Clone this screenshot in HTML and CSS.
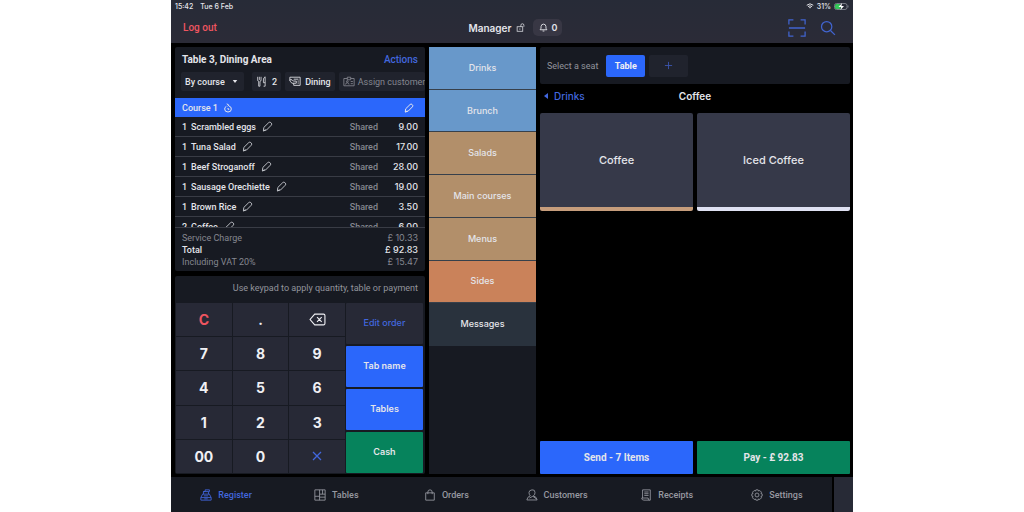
FILE: index.html
```html
<!DOCTYPE html>
<html lang="en">
<head>
<meta charset="utf-8">
<meta name="viewport" content="width=device-width, initial-scale=1">
<title>Register</title>
<link rel="stylesheet" href="styles.css">
</head>
<body>
<svg class="defs" aria-hidden="true">
  <symbol id="pencil" viewBox="0 0 12 12"><path d="M1.500 10.800 2 7 7.300 1.800q1.200-1.100 2.300-.1l.6.6q1 1.100-.1 2.300L5 9.800ZM1.500 10.800 4 9.500"/></symbol>
</svg>
<div class="app">
  <header class="top">
    <div class="status">
      <span>15:42</span><span class="date">Tue 6 Feb</span>
      <span class="power">
        <svg class="wifi" viewBox="0 0 16 12"><path d="M1.500 4.500Q8-1.300 14.500 4.500M4 7.200q4-3.400 8 0"/><path class="solid" d="m8 11-2.200-2.400q2.200-1.500 4.400 0Z"/></svg>
        <span>31%</span>
        <svg class="battery" viewBox="0 0 30 14"><rect class="cell" x="1" y="1" width="25" height="12" rx="4"/><rect class="charge" x="2" y="2" width="11" height="10" rx="3"/><path class="bolt" d="M16 0 9 8h5l-1 6 7-8h-5Z"/><path class="cell" d="M28 5v4"/></svg>
      </span>
    </div>
    <div class="bar">
      <button class="logout">Log out</button>
      <div class="user">
        <span class="name">Manager</span>
        <svg class="lock" viewBox="0 0 12 12"><rect x="1.500" y="5" width="7.500" height="6"/><path d="M6.500 5V3q0-2 2-2t2 2v2M5.200 7.200v1.800"/></svg>
        <button class="bell"><svg viewBox="0 0 12 12"><path d="M1.500 9h9L9.300 7V4.800Q9 1.500 6 1.500T2.700 4.800V7ZM4.800 10.700h2.400"/></svg>0</button>
      </div>
      <div class="tools">
        <button aria-label="Scan"><svg class="scan" viewBox="0 0 20 20"><path d="M1 6V1h5M14 1h5v5M19 14v5h-5M6 19H1v-5M1 10h18"/></svg></button>
        <button aria-label="Search"><svg class="search" viewBox="0 0 18 18"><circle cx="7.500" cy="7.500" r="5.800"/><path d="m11.800 11.800 5 5"/></svg></button>
      </div>
    </div>
  </header>

  <main class="work">
    <div class="left">
      <section class="panel order">
        <div class="order-head"><h1>Table 3, Dining Area</h1><button class="link">Actions</button></div>
        <div class="chips">
          <label class="chip sort"><select aria-label="Group items"><option>By course</option></select><svg viewBox="0 0 6 4"><path d="M0 0h6L3 4Z"/></svg></label>
          <span class="rule"></span>
          <button class="chip"><svg class="cutlery" viewBox="0 0 14 14"><path d="M1.500 1v4q0 1.800 1.300 1.800V13h1.600V6.800Q5.800 6.800 5.800 5V1M3.600 1v4M9 13h2V1Q8.800 2 8.800 5v3.500H11"/></svg>2</button>
          <button class="chip"><svg viewBox="0 0 14 12"><path d="M1 1h12v9.500H5.500V8M1 1v4.500L3.500 8h5V5.500H5L3.500 4H1M5.500 3.300H11M10 5.500h1.500M10 7.800h1.500"/></svg>Dining</button>
          <button class="chip assign"><svg viewBox="0 0 14 12"><path d="M5 2.500H1V11h12V2.500H9M5 1h4v3H5ZM3 9.500q0-2 2-2t2 2M9 6h2.500M9 8.500h2.500"/><circle cx="5" cy="6" r="1"/></svg>Assign customer</button>
        </div>
        <div class="course"><span>Course 1</span><svg viewBox="0 0 12 12"><path d="M4.500 1 7 2.500 5.500 4M7 3.500q3 .7 3 3.700 0 3.600-4 3.600T2 7.200Q2 5 4 4M6 6v1.500h1.500"/></svg><button aria-label="Edit course"><svg><use href="#pencil"/></svg></button></div>
        <ul class="items">
          <li><span>1</span><span>Scrambled eggs</span><svg><use href="#pencil"/></svg><span class="shared">Shared</span><span class="price">9.00</span></li>
          <li><span>1</span><span>Tuna Salad</span><svg><use href="#pencil"/></svg><span class="shared">Shared</span><span class="price">17.00</span></li>
          <li><span>1</span><span>Beef Stroganoff</span><svg><use href="#pencil"/></svg><span class="shared">Shared</span><span class="price">28.00</span></li>
          <li><span>1</span><span>Sausage Orechiette</span><svg><use href="#pencil"/></svg><span class="shared">Shared</span><span class="price">19.00</span></li>
          <li><span>1</span><span>Brown Rice</span><svg><use href="#pencil"/></svg><span class="shared">Shared</span><span class="price">3.50</span></li>
          <li><span>2</span><span>Coffee</span><svg><use href="#pencil"/></svg><span class="shared">Shared</span><span class="price">6.00</span></li>
        </ul>
        <dl class="totals">
          <div><dt>Service Charge</dt><dd>£ 10.33</dd></div>
          <div class="total"><dt>Total</dt><dd>£ 92.83</dd></div>
          <div><dt>Including VAT 20%</dt><dd>£ 15.47</dd></div>
        </dl>
      </section>

      <section class="panel pad">
        <p class="hint">Use keypad to apply quantity, table or payment</p>
        <div class="pad-body">
          <div class="keys">
            <button class="clear">C</button><button>.</button>
            <button aria-label="Delete"><svg class="del" viewBox="0 0 18 14"><path d="M6 1.200h9.500q1.500 0 1.500 1.500v8.600q0 1.500-1.500 1.500H6L1 7ZM8.500 4.500l5 5M13.500 4.500l-5 5"/></svg></button>
            <button>7</button><button>8</button><button>9</button>
            <button>4</button><button>5</button><button>6</button>
            <button>1</button><button>2</button><button>3</button>
            <button>00</button><button>0</button>
            <button aria-label="Multiply"><svg class="times" viewBox="0 0 10 10"><path d="m1 1 8 8M9 1 1 9"/></svg></button>
          </div>
          <div class="actions">
            <button class="edit">Edit order</button>
            <button class="blue">Tab name</button>
            <button class="blue">Tables</button>
            <button class="green">Cash</button>
          </div>
        </div>
      </section>
    </div>

    <nav class="categories" aria-label="Categories">
      <button class="sky">Drinks</button>
      <button class="sky">Brunch</button>
      <button class="tan">Salads</button>
      <button class="tan">Main courses</button>
      <button class="tan">Menus</button>
      <button class="rust">Sides</button>
      <button class="slate">Messages</button>
    </nav>

    <section class="right">
      <div class="panel seats"><span>Select a seat</span><button class="seat blue">Table</button><button class="seat add" aria-label="Add seat"><svg viewBox="0 0 10 10"><path d="M5 1v8M1 5h8"/></svg></button></div>
      <div class="crumbs">
        <button class="link"><svg viewBox="0 0 4 6"><path d="M4 0v6L0 3Z"/></svg>Drinks</button>
        <h2>Coffee</h2>
      </div>
      <div class="products">
        <button class="product">Coffee</button>
        <button class="product pale">Iced Coffee</button>
      </div>
      <div class="checkout"><button class="blue">Send - 7 Items</button><button class="green">Pay - £ 92.83</button></div>
    </section>
  </main>

  <footer class="tabs">
    <nav>
      <a class="active" href="#"><svg viewBox="0 0 14 14"><path d="M3 6 1 10v3h12v-3l-2-4ZM1 10h12M4 6V3h2V1h5v2h-1v3M4 3h6M4.500 8h5M5 11.500h4"/></svg>Register</a>
      <a href="#"><svg viewBox="0 0 14 14"><path d="M1 1h12v12H1ZM6.500 1v12M1 8.500h5.500M6.500 6H13M10 1v5M6.500 9.500H13"/></svg>Tables</a>
      <a href="#"><svg viewBox="0 0 14 14"><path d="M2 4.500h10V13H2ZM4.500 6V3.500Q4.500 1 7 1t2.500 2.500V6"/></svg>Orders</a>
      <a href="#"><svg viewBox="0 0 14 14"><path d="M8.500 8Q12.500 9 13 12.800H1Q1.500 9 5 8M5 8Q3.500 6.500 3.500 4T7 1t3.500 3T8.500 8M4 10.500l4-2 4 3"/></svg>Customers</a>
      <a href="#"><svg viewBox="0 0 14 14"><path d="M3 1h9v12H4.500Q2 13 2 10.500H9.500Q9.500 13 11 13M3 1v9.500M5 3.500h5M5 5.500h5M5 7.500h5"/></svg>Receipts</a>
      <a href="#"><svg viewBox="0 0 14 14"><path d="m5.700 1h2.600l.5 1.400 1.500-.6 1.900 1.900-.6 1.500 1.400.5v2.600l-1.400.5.6 1.500-1.900 1.900-1.500-.6-.5 1.400H5.700l-.5-1.400-1.500.6-1.900-1.900.6-1.500L1 8.300V5.700l1.400-.5-.6-1.500 1.900-1.900 1.500.6Z"/><circle cx="7" cy="7" r="2.300"/></svg>Settings</a>
    </nav>
    <div class="corner"></div>
  </footer>
</div>
</body>
</html>
```
FILE: styles.css
```css
* { box-sizing: border-box; }
body { margin: 0; background: #fff; font-family: Inter, "Liberation Sans", sans-serif; font-size: 9px; color: #e4e5ea; }
button, select { font: inherit; color: inherit; background: none; border: 0; padding: 0; margin: 0; }
h1, h2, p, ul, dl, dd { margin: 0; padding: 0; }
svg { fill: none; stroke: currentColor; stroke-width: 1; flex: none; }
.defs { position: absolute; width: 0; height: 0; }
.app { display: flex; flex-direction: column; max-width: 682px; min-height: 100vh; margin: 0 auto; background: #000; }

.top { height: 43px; background: linear-gradient(#272b37, #2b2b37); }
.status { display: flex; align-items: center; height: 12px; padding: 0 4px; font-size: 7px; font-weight: 500; }
.date { margin-left: 7px; }
.power { display: flex; align-items: center; gap: 3px; margin-left: auto; }
.wifi { width: 8px; height: 6px; stroke-width: 2; }
.solid { fill: currentColor; stroke: none; }
.battery { width: 15px; height: 7px; }
.cell { stroke: #777b85; stroke-width: 2; }
.charge { fill: #35c759; stroke: none; }
.bolt { fill: #fff; stroke: none; }
.bar { display: grid; grid-template-columns: 1fr auto 1fr; align-items: center; height: 31px; padding: 0 17px 0 12px; }
.logout { justify-self: start; color: #ef5560; font-family: Roboto, sans-serif; font-size: 10px; font-weight: 500; }
.user { display: flex; align-items: center; gap: 5px; padding-left: 12px; }
.name { font-size: 10px; font-weight: 600; }
.lock { width: 9px; height: 9px; }
.bell { display: flex; align-items: center; justify-content: center; gap: 4px; width: 29px; height: 17px; margin-left: 3px; border-radius: 5px; background: #383744; font-weight: 600; }
.bell svg { width: 9px; height: 9px; stroke-width: 1.2; }
.tools { display: flex; justify-content: flex-end; align-items: center; gap: 14px; color: #4164cf; }
.tools button, .crumbs button { display: flex; align-items: center; }
.scan { width: 18px; height: 18px; stroke-width: 1.4; }
.search { width: 16px; height: 16px; stroke-width: 1.4; }

.work { flex: 1; display: grid; grid-template-columns: 250fr 107fr 310fr; gap: 4px; padding: 4px 3px 3px 4px; }
.panel { background: #171a22; border-radius: 2px; }
.left { display: flex; flex-direction: column; gap: 5px; min-width: 0; }
.order { height: 224px; display: flex; flex-direction: column; overflow: hidden; font-family: Roboto, sans-serif; }
.order-head { display: flex; align-items: center; justify-content: space-between; height: 24px; padding: 0 7px; }
h1 { font-size: 10px; font-weight: 700; }
.link { color: #4267de; font-weight: 500; }
.order-head .link { font-size: 10px; }
.chips { display: flex; align-items: center; gap: 4px; height: 19px; margin-top: 1px; padding-left: 6px; }
.chip { display: flex; flex: none; align-items: center; gap: 4px; height: 19px; padding: 0 4px; border-radius: 2px; background: #20232d; font-weight: 500; white-space: nowrap; }
.chip svg { width: 12px; height: 11px; }
.sort { justify-content: space-between; width: 63px; padding-right: 6px; }
.sort select { appearance: none; }
.chip.sort svg { width: 6px; height: 3px; fill: currentColor; stroke: none; }
.rule { width: 1px; height: 15px; background: #3b3e48; }
.assign { flex: 1; gap: 3px; padding-right: 0; color: #858790; font-weight: 400; }
.course { display: flex; align-items: center; gap: 5px; height: 19px; margin-top: 7px; padding: 0 11px 0 7px; background: #2b67fb; flex: none; font-weight: 500; }
.course svg { width: 10px; height: 10px; stroke-width: 1.2; }
.course button { display: flex; margin-left: auto; }
.items { flex: 1; min-height: 0; overflow: hidden; list-style: none; font-weight: 500; }
.items li { display: flex; align-items: center; height: 20px; padding: 0 7px; border-bottom: 1px solid #393c45; }
.items li span:first-child { width: 9px; flex: none; }
.items svg { width: 11px; height: 11px; margin-left: 6px; color: #c8cad0; }
.shared { margin-left: auto; color: #858790; }
.price { width: 40px; text-align: right; font-family: Inter, sans-serif; }
.totals { flex: none; padding: 4px 7px 3px; border-top: 1px solid #393c45; color: #858790; }
.totals div { display: flex; justify-content: space-between; line-height: 12px; }
.totals dd { font-family: Inter, sans-serif; }
.total { color: #e4e5ea; font-weight: 500; }

.pad { flex: 1; display: flex; flex-direction: column; padding: 0 2px 1px 1px; }
.hint { height: 27px; padding-right: 5px; line-height: 25px; text-align: right; color: #92949c; font-family: Roboto, sans-serif; }
.pad-body { flex: 1; display: grid; grid-template-columns: 169fr 77fr; gap: 1px; }
.keys { display: grid; grid-template-columns: repeat(3, 1fr); grid-auto-rows: 1fr; gap: 1px; }
.keys button { display: flex; align-items: center; justify-content: center; background: #272936; font-size: 14px; font-weight: 700; color: #f0f0f4; }
.keys .clear { color: #ef5560; }
.del { width: 17px; height: 13px; stroke-width: 1.2; }
.times { width: 10px; height: 10px; color: #4267de; stroke-width: 1.3; }
.actions { display: grid; grid-auto-rows: 1fr; gap: 2px; }
.actions button { border-radius: 1px; padding-bottom: 2px; font-weight: 600; }
.actions .edit { background: #272936; color: #4267de; font-weight: 500; }
.blue, .actions .blue { background: #2b67fb; }
.green, .actions .green { background: #06835c; }

.categories { display: grid; grid-template-rows: repeat(10, 1fr); background: #171a22; }
.categories button { padding-bottom: 1px; border-bottom: 1px solid #37404b; font-weight: 500; }
.sky { background: #6898ca; }
.tan { background: #b28f6a; }
.rust { background: #ca825a; }
.categories .slate { background: #29323d; border-color: #29323d; }

.right { display: flex; flex-direction: column; min-width: 0; }
.seats { display: flex; align-items: center; height: 37px; padding: 0 7px; gap: 4px; color: #92949c; font-family: Roboto, sans-serif; }
.seat { display: flex; align-items: center; justify-content: center; width: 39px; height: 22px; border-radius: 2px; color: #f0f0f4; font-weight: 700; }
.seats .blue { margin-left: 4px; }
.seats .add { background: #20232d; color: #3b55ae; }
.add svg { width: 9px; height: 9px; }
.crumbs { display: grid; grid-template-columns: 1fr auto 1fr; align-items: center; height: 24px; margin-bottom: 5px; padding: 0 4px; font-size: 10px; }
.crumbs svg { width: 4px; height: 6px; margin-right: 6px; fill: currentColor; stroke: none; }
h2 { font-size: 10px; font-weight: 600; }
.products, .checkout { display: grid; grid-template-columns: 1fr 1fr; gap: 4px; }
.product { height: 98px; background: #363949; border-bottom: 4px solid #c69d7c; border-radius: 2px; font-size: 11px; font-weight: 500; }
.pale { border-color: #dfe1f2; }
.checkout { margin-top: auto; }
.checkout button { height: 33px; border-radius: 1px; padding-bottom: 1px; font-family: Roboto, sans-serif; font-size: 10px; font-weight: 700; }

.tabs { display: flex; gap: 2px; height: 35px; }
.tabs nav { flex: 1; display: flex; background: #171a22; }
.tabs a { flex: 1; display: flex; align-items: center; justify-content: center; gap: 6px; color: #9799a1; text-decoration: none; font-family: Roboto, sans-serif; font-weight: 500; }
.tabs svg { width: 12px; height: 12px; }
.tabs .active { color: #4267de; }
.corner { width: 19px; background: #272a36; }
```
